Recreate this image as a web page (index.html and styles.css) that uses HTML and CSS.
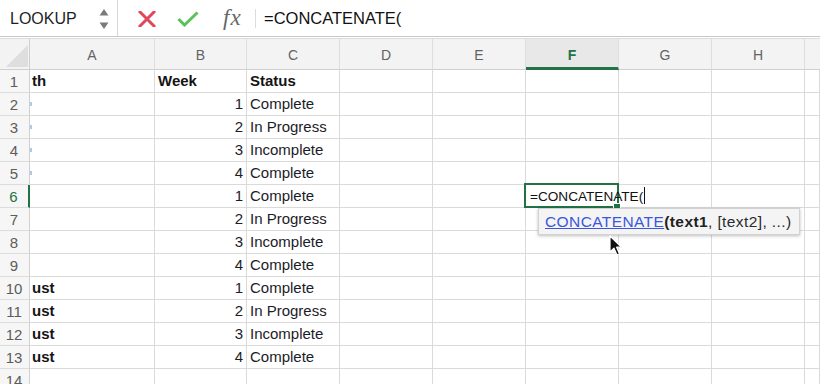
FILE: index.html
```html
<!DOCTYPE html>
<html>
<head>
<meta charset="utf-8">
<link rel="stylesheet" href="styles.css">
</head>
<body>
<div class="toolbar">
  <div class="namebox">
    <span class="name">LOOKUP</span>
    <svg class="stepper" width="10" height="22" viewBox="0 0 10 22"><path d="M5 1 L9.5 7.5 L0.5 7.5 Z" fill="#7a7a7a"/><path d="M5 21 L9.5 14.5 L0.5 14.5 Z" fill="#7a7a7a"/></svg>
  </div>
  <div class="actions">
    <svg class="icon-x" width="18" height="16" viewBox="0 0 18 16"><path d="M2 1 L16 15 M16 1 L2 15" stroke="#e0485a" stroke-width="3" stroke-linecap="square"/></svg>
    <svg class="icon-ok" width="22" height="16" viewBox="0 0 22 16"><path d="M1.5 8 L7.5 14 L20.5 1.5" stroke="#5ac25a" stroke-width="3" fill="none"/></svg>
    <span class="fx">fx</span>
  </div>
  <div class="formula">=CONCATENATE(</div>
</div>
<div class="sheet">
  <div class="h corner"><svg width="22" height="22" viewBox="0 0 22 22"><path d="M22 0 L22 22 L0 22 Z" fill="#dedede"/></svg></div>
  <div class="h">A</div><div class="h">B</div><div class="h">C</div><div class="h">D</div><div class="h">E</div><div class="h sel">F</div><div class="h">G</div><div class="h">H</div><div class="h last"></div>

  <div class="rn">1</div><div class="c a"><b>th</b></div><div class="c"><b>Week</b></div><div class="c"><b>Status</b></div><div class="c"></div><div class="c"></div><div class="c"></div><div class="c"></div><div class="c"></div><div class="c"></div>
  <div class="rn">2</div><div class="c a tick"></div><div class="c n">1</div><div class="c">Complete</div><div class="c"></div><div class="c"></div><div class="c"></div><div class="c"></div><div class="c"></div><div class="c"></div>
  <div class="rn">3</div><div class="c a tick"></div><div class="c n">2</div><div class="c">In Progress</div><div class="c"></div><div class="c"></div><div class="c"></div><div class="c"></div><div class="c"></div><div class="c"></div>
  <div class="rn">4</div><div class="c a tick"></div><div class="c n">3</div><div class="c">Incomplete</div><div class="c"></div><div class="c"></div><div class="c"></div><div class="c"></div><div class="c"></div><div class="c"></div>
  <div class="rn">5</div><div class="c a tick"></div><div class="c n">4</div><div class="c">Complete</div><div class="c"></div><div class="c"></div><div class="c"></div><div class="c"></div><div class="c"></div><div class="c"></div>
  <div class="rn act">6</div><div class="c a"></div><div class="c n">1</div><div class="c">Complete</div><div class="c"></div><div class="c"></div><div class="c active"><span class="edit">=CONCATENATE(<span class="caret"></span></span><span class="handle"></span></div><div class="c"></div><div class="c"></div><div class="c"></div>
  <div class="rn">7</div><div class="c a"></div><div class="c n">2</div><div class="c">In Progress</div><div class="c"></div><div class="c"></div><div class="c"></div><div class="c"></div><div class="c"></div><div class="c"></div>
  <div class="rn">8</div><div class="c a"></div><div class="c n">3</div><div class="c">Incomplete</div><div class="c"></div><div class="c"></div><div class="c"></div><div class="c"></div><div class="c"></div><div class="c"></div>
  <div class="rn">9</div><div class="c a"></div><div class="c n">4</div><div class="c">Complete</div><div class="c"></div><div class="c"></div><div class="c"></div><div class="c"></div><div class="c"></div><div class="c"></div>
  <div class="rn">10</div><div class="c a"><b>ust</b></div><div class="c n">1</div><div class="c">Complete</div><div class="c"></div><div class="c"></div><div class="c"></div><div class="c"></div><div class="c"></div><div class="c"></div>
  <div class="rn">11</div><div class="c a"><b>ust</b></div><div class="c n">2</div><div class="c">In Progress</div><div class="c"></div><div class="c"></div><div class="c"></div><div class="c"></div><div class="c"></div><div class="c"></div>
  <div class="rn">12</div><div class="c a"><b>ust</b></div><div class="c n">3</div><div class="c">Incomplete</div><div class="c"></div><div class="c"></div><div class="c"></div><div class="c"></div><div class="c"></div><div class="c"></div>
  <div class="rn">13</div><div class="c a"><b>ust</b></div><div class="c n">4</div><div class="c">Complete</div><div class="c"></div><div class="c"></div><div class="c"></div><div class="c"></div><div class="c"></div><div class="c"></div>
  <div class="rn">14</div><div class="c a"></div><div class="c n"></div><div class="c"></div><div class="c"></div><div class="c"></div><div class="c"></div><div class="c"></div><div class="c"></div><div class="c"></div>
</div>

<div class="tooltip"><span class="fn">CONCATENATE</span><b>(text1</b>, [text2], ...)</div>
<svg class="pointer" width="14" height="22" viewBox="0 0 14 22"><path d="M1 1 L1 17 L5 13.2 L8 20 L10.5 19 L7.6 12.2 L12.6 12.2 Z" fill="#111" stroke="#fff" stroke-width="1.2" stroke-linejoin="round"/></svg>
</body>
</html>
```
FILE: styles.css
```css
html, body {
  margin: 0;
  padding: 0;
  background: #fff;
  width: 820px;
  height: 384px;
  overflow: hidden;
  font-family: "Liberation Sans", Arial, sans-serif;
}

.toolbar {
  display: flex;
  align-items: stretch;
  height: 36px;
  border-bottom: 1px solid #c9c9c9;
  background: #fff;
}

.namebox {
  width: 118px;
  box-sizing: border-box;
  display: flex;
  align-items: center;
  justify-content: space-between;
  padding: 0 8px 0 10px;
  border-right: 1px solid #d6d6d6;
}

.name {
  font-size: 16px;
  color: #1f1f1f;
  padding-top: 1px;
}

.stepper {
  margin-top: 1px;
}

.actions {
  width: 138px;
  display: flex;
  align-items: center;
  box-sizing: border-box;
  padding-left: 20px;
  position: relative;
}

.actions::after {
  content: "";
  position: absolute;
  right: 0;
  top: 9px;
  bottom: 8px;
  border-right: 1px solid #dcdcdc;
}

.icon-x {
  margin-top: 2px;
}

.icon-ok {
  margin-left: 21px;
  margin-top: 2px;
}

.fx {
  font-family: "Liberation Serif", "Times New Roman", serif;
  font-style: italic;
  font-size: 23px;
  color: #666;
  margin-left: 24px;
  letter-spacing: 1px;
  margin-top: -1px;
}

.formula {
  display: flex;
  align-items: center;
  padding-left: 8px;
  font-size: 16.5px;
  color: #111;
  padding-top: 1px;
}

.sheet {
  margin-top: 1px;
  border-top: 1px solid #dedede;
  display: grid;
  grid-template-columns: 30px 125px 92px 93px 93px 93px 93px 93px 93px 1fr;
  grid-template-rows: 31px repeat(14, 23px);
}

.h {
  background: #f3f3f3;
  border-bottom: 1px solid #cfcfcf;
  border-right: 1px solid #dddddd;
  font-size: 14px;
  color: #636363;
  display: flex;
  align-items: center;
  justify-content: center;
  padding-top: 2px;
  box-sizing: border-box;
}

.h.corner {
  justify-content: flex-end;
  align-items: flex-end;
  padding: 0 1px 2px 0;
  border-right: 1px solid #cfcfcf;
}

.h.sel {
  background: #e8e8e8;
  color: #217346;
  font-weight: bold;
  border-bottom: 3px solid #217346;
  padding-top: 4px;
}

.h.last {
  border-right: none;
}

.rn {
  background: #f6f6f6;
  border-right: 1px solid #cfcfcf;
  border-bottom: 1px solid #dcdcdc;
  font-size: 15px;
  color: #5c5c5c;
  display: flex;
  align-items: center;
  justify-content: center;
  box-sizing: border-box;
  padding-right: 1px;
}

.rn.act {
  color: #217346;
  border-right: 2px solid #217346;
}

.c {
  border-right: 1px solid #dadada;
  border-bottom: 1px solid #dadada;
  box-sizing: border-box;
  font-size: 15px;
  line-height: 22px;
  color: #1c1c28;
  padding: 0 3px;
  white-space: nowrap;
  overflow: hidden;
}

.c.a {
  padding: 0 3px 0 2px;
}

.c.tick {
  background: linear-gradient(#fff 9px, #a9cbe8 9px, #a9cbe8 13px, #fff 13px) no-repeat 0 0 / 2px 100%;
}

.c.n {
  text-align: right;
}

.c b {
  font-weight: bold;
  color: #141414;
}

.c.active {
  overflow: visible;
  position: relative;
  z-index: 2;
  padding: 0 4px;
}

.c.active::before {
  content: "";
  position: absolute;
  left: -2px;
  top: -2px;
  right: -1px;
  bottom: -1px;
  border: 2px solid #217346;
  pointer-events: none;
}

.edit {
  position: relative;
  font-size: 13.6px;
  color: #111;
}

.caret {
  display: inline-block;
  width: 1px;
  height: 17px;
  background: #111;
  vertical-align: -3px;
  margin-left: 1px;
}

.handle {
  position: absolute;
  right: -3px;
  bottom: -3px;
  width: 6px;
  height: 5px;
  background: #217346;
  border: 1px solid #fff;
}

.tooltip {
  position: absolute;
  left: 538px;
  top: 208px;
  width: 262px;
  height: 27px;
  box-sizing: border-box;
  background: #f4f4f4;
  border: 1px solid #d2d2d2;
  box-shadow: 0 1px 3px rgba(0, 0, 0, 0.25);
  font-size: 15.5px;
  letter-spacing: 0.4px;
  line-height: 25px;
  padding-left: 6px;
  color: #2a2a2a;
  white-space: nowrap;
  z-index: 5;
}

.tooltip .fn {
  color: #3a57e0;
  text-decoration: underline;
}

.tooltip b {
  color: #1f1f1f;
}

.pointer {
  position: absolute;
  left: 609px;
  top: 235px;
  z-index: 6;
}
```
